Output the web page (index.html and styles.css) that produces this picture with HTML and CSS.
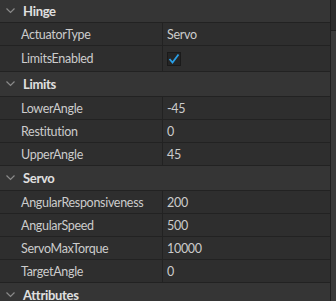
FILE: index.html
```html
<!DOCTYPE html>
<html lang="en">
<head>
    <meta charset="UTF-8">
    <title>Properties</title>
    <link rel="stylesheet" href="styles.css">
</head>
<body>
    <div class="panel">
        <div class="list">
            <div class="section first">
                <svg class="chev" width="9" height="6" viewBox="0 0 9 6"><polyline points="0.5,0.5 4.5,4.5 8.5,0.5"/></svg>
                <span>Hinge</span>
            </div>
            <div class="row"><div class="name">ActuatorType</div><div class="value">Servo</div></div>
            <div class="row tall">
                <div class="name">LimitsEnabled</div>
                <div class="value">
                    <span class="check">
                        <svg width="12" height="12" viewBox="0 0 12 12"><polyline points="1.5,6 4.5,9.5 10.5,1.5"/></svg>
                    </span>
                </div>
            </div>
            <div class="section">
                <svg class="chev" width="9" height="6" viewBox="0 0 9 6"><polyline points="0.5,0.5 4.5,4.5 8.5,0.5"/></svg>
                <span>Limits</span>
            </div>
            <div class="row"><div class="name">LowerAngle</div><div class="value">-45</div></div>
            <div class="row"><div class="name">Restitution</div><div class="value">0</div></div>
            <div class="row"><div class="name">UpperAngle</div><div class="value">45</div></div>
            <div class="section">
                <svg class="chev" width="9" height="6" viewBox="0 0 9 6"><polyline points="0.5,0.5 4.5,4.5 8.5,0.5"/></svg>
                <span>Servo</span>
            </div>
            <div class="row"><div class="name">AngularResponsiveness</div><div class="value">200</div></div>
            <div class="row"><div class="name">AngularSpeed</div><div class="value">500</div></div>
            <div class="row"><div class="name">ServoMaxTorque</div><div class="value">10000</div></div>
            <div class="row"><div class="name">TargetAngle</div><div class="value">0</div></div>
            <div class="section">
                <svg class="chev" width="9" height="6" viewBox="0 0 9 6"><polyline points="0.5,0.5 4.5,4.5 8.5,0.5"/></svg>
                <span>Attributes</span>
            </div>
        </div>
        <div class="scrollbar"><div class="thumb"></div></div>
    </div>
</body>
</html>
```
FILE: styles.css
```css
body {
    margin: 0;
    padding: 0;
    background-color: #2e2e2e;
    font-family: Lato, "Open Sans", sans-serif;
    font-size: 12.5px;
    letter-spacing: -0.3px;
    color: #cccccc;
    overflow: hidden;
}
.panel {
    display: flex;
    width: 336px;
    height: 301px;
    overflow: hidden;
}
.list {
    flex: 1;
}
.section {
    display: flex;
    align-items: center;
    height: 24px;
    background-color: #353535;
    border-bottom: 1px solid #222222;
    font-size: 13px;
    font-weight: bold;
    color: #e0e0e0;
}
.section.first {
    height: 22px;
}
.chev {
    margin: 0 8px 0 6px;
    fill: none;
    stroke: #8a8a8a;
    stroke-width: 1.2;
}
.row {
    display: flex;
    height: 22px;
    background-color: #2e2e2e;
    border-bottom: 1px solid #222222;
}
.row.tall {
    height: 25px;
}
.name {
    width: 141px;
    padding-left: 21px;
    border-right: 1px solid #222222;
    display: flex;
    align-items: center;
}
.value {
    flex: 1;
    padding-left: 4px;
    display: flex;
    align-items: center;
}
.check {
    display: flex;
    align-items: center;
    justify-content: center;
    width: 12px;
    height: 12px;
    background-color: #252525;
    border: 1px solid #1a1a1a;
}
.check svg {
    fill: none;
    stroke: #2a9fe6;
    stroke-width: 1.8;
}
.scrollbar {
    width: 5px;
    border-left: 1px solid #1f1f1f;
    background-color: #3a3a3a;
}
.thumb {
    height: 30px;
    background-color: #2e2e2e;
    border-bottom: 1px solid #1f1f1f;
}
```
